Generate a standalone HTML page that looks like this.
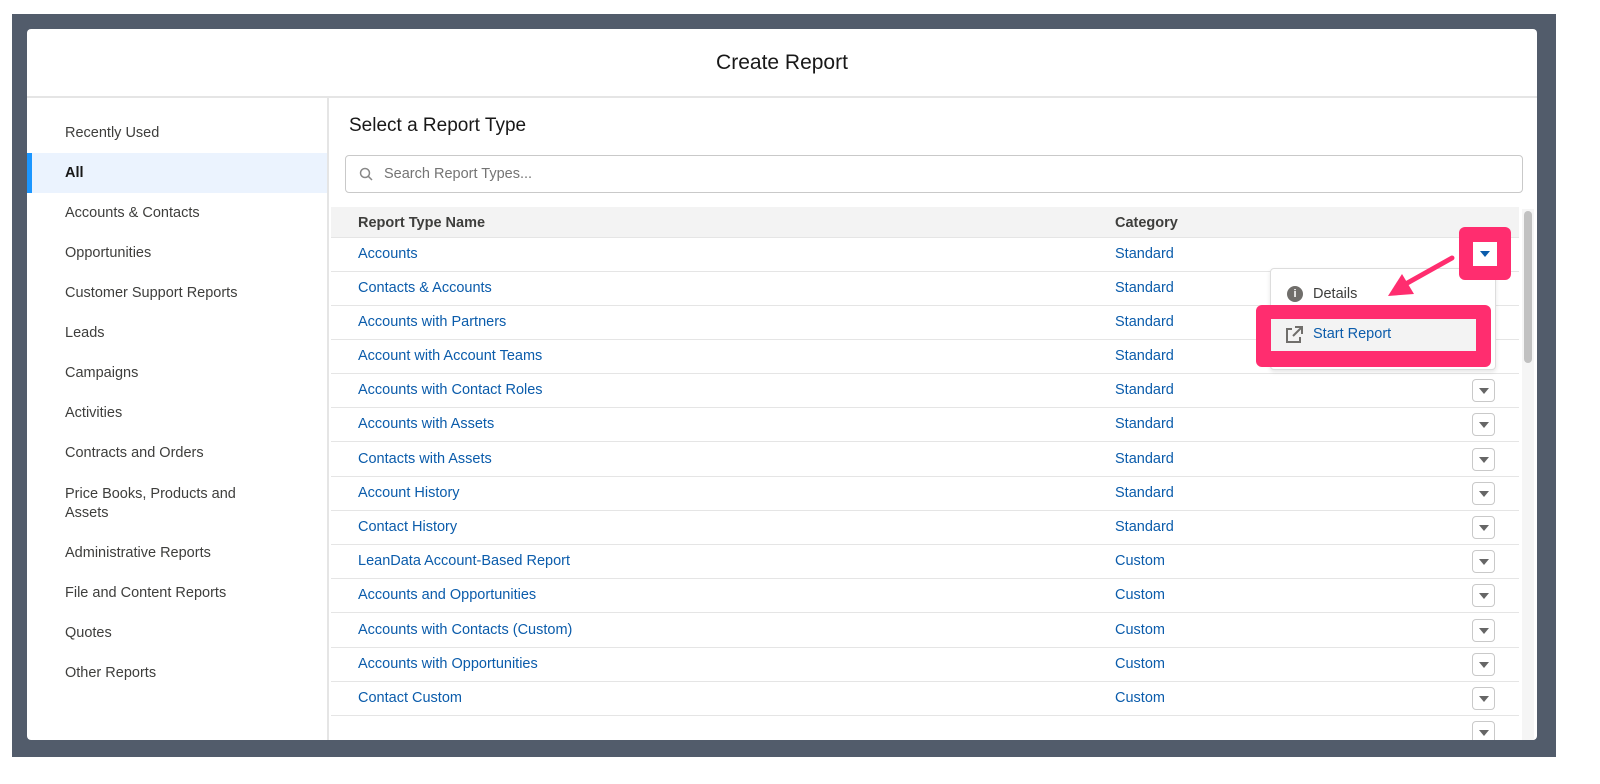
<!DOCTYPE html>
<html><head><style>
*{box-sizing:border-box;margin:0;padding:0}
body{width:1600px;height:784px;background:#fff;font-family:"Liberation Sans",sans-serif;position:relative;overflow:hidden}
.frame{position:absolute;left:12px;top:14px;width:1544px;height:743px;background:#525c6b}
.modal{position:absolute;left:27px;top:29px;width:1510px;height:711px;background:#fff;border-radius:4px;overflow:hidden}
.hdr{position:absolute;left:0;top:0;width:100%;height:69px;border-bottom:2px solid #e5e5e5;text-align:center;line-height:68px;font-size:21px;color:#181818}
.nav{position:absolute;left:0;top:69px;width:302px;height:642px;border-right:2px solid #e5e5e5}
.nav .t{position:absolute;left:38px;font-size:14.5px;color:#3e3e3c}
.nav .sel{position:absolute;left:0;top:55px;width:300px;height:40px;background:#ebf3fe;border-left:5px solid #1b96ff}
h2{position:absolute;left:322px;top:86px;font-size:19px;font-weight:normal;color:#181818}
.search{position:absolute;left:318px;top:126px;width:1178px;height:38px;border:1px solid #c9c9c9;border-radius:4px;font-size:14.5px;color:#747474;padding-left:38px;line-height:36px}
.search svg{position:absolute;left:13px;top:11px}
.th{position:absolute;left:304px;top:178px;width:1188px;height:31px;background:#f3f3f3;border-bottom:1px solid #e5e5e5;font-weight:bold;font-size:14.5px;color:#3e3e3c}
.row{position:absolute;left:304px;width:1188px;height:34px;border-bottom:1px solid #e5e5e5;font-size:14.5px;color:#0b5cab}
.row span,.th span{position:absolute;top:8px}
.dd{position:absolute;left:1141px;top:5px;width:23px;height:23px;border:1px solid #c9c9c9;border-radius:4px;background:#fff}
.dd:after{content:"";position:absolute;left:6px;top:8px;border-left:5px solid transparent;border-right:5px solid transparent;border-top:6px solid #666}
.sb{position:absolute;left:1495px;top:180px;width:12px;height:531px;background:#f5f5f5}
.sb i{position:absolute;left:2px;top:2px;width:8px;height:152px;background:#c1c1c1;border-radius:4px}
</style></head><body>
<div class="frame"></div>
<div class="modal">
<div class="hdr">Create Report</div>
<div class="nav">
<div class="sel"></div>
<div class="t" style="top:27px">Recently Used</div>
<div class="t" style="top:67px;font-weight:bold;color:#181818">All</div>
<div class="t" style="top:107px">Accounts &amp; Contacts</div>
<div class="t" style="top:147px">Opportunities</div>
<div class="t" style="top:187px">Customer Support Reports</div>
<div class="t" style="top:227px">Leads</div>
<div class="t" style="top:267px">Campaigns</div>
<div class="t" style="top:307px">Activities</div>
<div class="t" style="top:347px">Contracts and Orders</div>
<div class="t" style="top:387px;line-height:19px">Price Books, Products and<br>Assets</div>
<div class="t" style="top:447px">Administrative Reports</div>
<div class="t" style="top:487px">File and Content Reports</div>
<div class="t" style="top:527px">Quotes</div>
<div class="t" style="top:567px">Other Reports</div>
</div>
<h2>Select a Report Type</h2>
<div class="search"><svg width="14" height="14" viewBox="0 0 14 14"><circle cx="6" cy="6" r="4.5" fill="none" stroke="#888" stroke-width="1.5"/><path d="M9.3 9.3L13 13" stroke="#888" stroke-width="1.5"/></svg>Search Report Types...</div>
<div class="th"><span style="left:27px">Report Type Name</span><span style="left:784px">Category</span></div>
<div class="row" style="top:209px"><span style="left:27px">Accounts</span><span style="left:784px">Standard</span></div>
<div class="row" style="top:243px"><span style="left:27px">Contacts &amp; Accounts</span><span style="left:784px">Standard</span></div>
<div class="row" style="top:277px"><span style="left:27px">Accounts with Partners</span><span style="left:784px">Standard</span></div>
<div class="row" style="top:311px"><span style="left:27px">Account with Account Teams</span><span style="left:784px">Standard</span></div>
<div class="row" style="top:345px"><span style="left:27px">Accounts with Contact Roles</span><span style="left:784px">Standard</span><div class="dd"></div></div>
<div class="row" style="top:379px"><span style="left:27px">Accounts with Assets</span><span style="left:784px">Standard</span><div class="dd"></div></div>
<div class="row" style="top:414px"><span style="left:27px">Contacts with Assets</span><span style="left:784px">Standard</span><div class="dd"></div></div>
<div class="row" style="top:448px"><span style="left:27px">Account History</span><span style="left:784px">Standard</span><div class="dd"></div></div>
<div class="row" style="top:482px"><span style="left:27px">Contact History</span><span style="left:784px">Standard</span><div class="dd"></div></div>
<div class="row" style="top:516px"><span style="left:27px">LeanData Account-Based Report</span><span style="left:784px">Custom</span><div class="dd"></div></div>
<div class="row" style="top:550px"><span style="left:27px">Accounts and Opportunities</span><span style="left:784px">Custom</span><div class="dd"></div></div>
<div class="row" style="top:585px"><span style="left:27px">Accounts with Contacts (Custom)</span><span style="left:784px">Custom</span><div class="dd"></div></div>
<div class="row" style="top:619px"><span style="left:27px">Accounts with Opportunities</span><span style="left:784px">Custom</span><div class="dd"></div></div>
<div class="row" style="top:653px"><span style="left:27px">Contact Custom</span><span style="left:784px">Custom</span><div class="dd"></div></div>
<div class="row" style="top:687px;border:none"><div class="dd"></div></div>
<div class="sb"><i></i></div>
</div>
<div style="position:absolute;left:1270px;top:268px;width:226px;height:102px;background:#fff;border:1px solid #ddd;border-radius:4px;box-shadow:0 2px 4px rgba(0,0,0,.1)"></div>
<div style="position:absolute;left:1287px;top:286px;width:16px;height:16px;border-radius:50%;background:#706e6b;color:#fff;font-size:11px;font-weight:bold;text-align:center;line-height:16px">i</div>
<div style="position:absolute;left:1313px;top:286px;font-size:14.5px;color:#3e3e3c">Details</div>
<div style="position:absolute;left:1256px;top:305px;width:235px;height:62px;background:#ff2d6f;border-radius:6px"></div>
<div style="position:absolute;left:1271px;top:319px;width:205px;height:32px;background:#f3f3f3"></div>
<svg style="position:absolute;left:1284px;top:325px" width="20" height="20" viewBox="0 0 20 20"><path d="M8 4H3v13h13v-5" fill="none" stroke="#706e6b" stroke-width="2"/><path d="M11 2h7v7M18 2L9 11" fill="none" stroke="#706e6b" stroke-width="2"/></svg>
<div style="position:absolute;left:1313px;top:326px;font-size:14.5px;color:#0b5cab">Start Report</div>
<div style="position:absolute;left:1459px;top:227px;width:52px;height:53px;background:#ff2d6f;border-radius:6px"></div>
<div style="position:absolute;left:1473px;top:242px;width:24px;height:24px;background:#fff"></div>
<div style="position:absolute;left:1480px;top:251px;border-left:5px solid transparent;border-right:5px solid transparent;border-top:6px solid #0b5cab"></div>
<svg style="position:absolute;left:1380px;top:250px" width="80" height="55" viewBox="0 0 80 55"><path d="M72 8L22 36" stroke="#ff2d6f" stroke-width="5" stroke-linecap="round"/><path d="M8 46L22 24L34 44Z" fill="#ff2d6f"/></svg>
</body></html>
